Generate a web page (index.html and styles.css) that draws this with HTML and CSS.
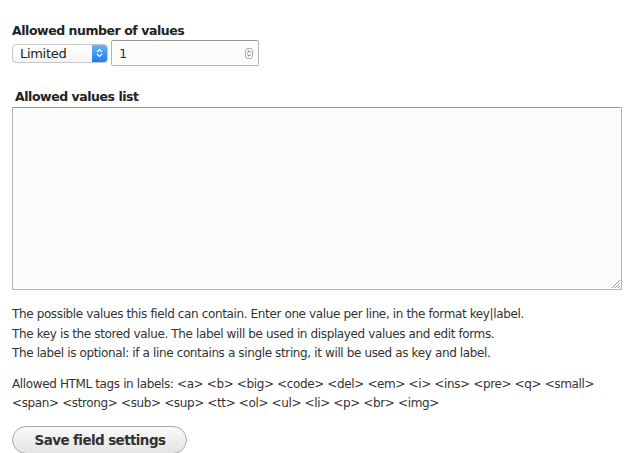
FILE: index.html
```html
<!DOCTYPE html>
<html>
<head>
<meta charset="utf-8">
<link rel="stylesheet" href="styles.css">
</head>
<body>
<form class="settings">
  <div class="form-item">
    <label class="label">Allowed number of values</label>
    <div class="cardinality">
      <div class="select">
        <span class="select-value">Limited</span>
        <span class="select-arrow">
          <svg width="7" height="10" viewBox="0 0 7 10"><path d="M1 4 L3.5 1.5 L6 4 M1 6 L3.5 8.5 L6 6" fill="none" stroke="#fff" stroke-width="1.2"/></svg>
        </span>
      </div>
      <div class="number">
        <span class="number-value">1</span>
        <span class="spinner">
          <svg width="6" height="9" viewBox="0 0 6 9"><path d="M1.2 3.6 L3 1.8 L4.8 3.6 M1.2 5.4 L3 7.2 L4.8 5.4" fill="none" stroke="#555" stroke-width="0.9"/></svg>
        </span>
      </div>
    </div>
  </div>

  <div class="form-item values">
    <label class="label label-indent">Allowed values list</label>
    <div class="textarea">
      <svg class="grip" width="9" height="9" viewBox="0 0 9 9"><path d="M9 1 L1 9 M9 4 L4 9 M9 7 L7 9" stroke="#999" stroke-width="1"/></svg>
    </div>
    <div class="description">
      <p>The possible values this field can contain. Enter one value per line, in the format key|label.<br>The key is the stored value. The label will be used in displayed values and edit forms.<br>The label is optional: if a line contains a single string, it will be used as key and label.</p>
      <p>Allowed HTML tags in labels: &lt;a&gt; &lt;b&gt; &lt;big&gt; &lt;code&gt; &lt;del&gt; &lt;em&gt; &lt;i&gt; &lt;ins&gt; &lt;pre&gt; &lt;q&gt; &lt;small&gt;<br>&lt;span&gt; &lt;strong&gt; &lt;sub&gt; &lt;sup&gt; &lt;tt&gt; &lt;ol&gt; &lt;ul&gt; &lt;li&gt; &lt;p&gt; &lt;br&gt; &lt;img&gt;</p>
    </div>
  </div>

  <div class="actions">
    <button type="button" class="button">Save field settings</button>
  </div>
</form>
</body>
</html>
```

FILE: styles.css
```css
html, body {
  margin: 0;
  padding: 0;
  background: #fff;
}
body {
  font-family: "DejaVu Sans", Verdana, sans-serif;
  color: #333;
  overflow: hidden;
}
.settings {
  padding: 22px 15px 0 12px;
}
.label {
  display: block;
  font-weight: bold;
  font-size: 12.5px;
  line-height: 17px;
  color: #222;
  letter-spacing: -0.45px;
  white-space: nowrap;
}
.label-indent {
  padding-left: 3px;
}
.cardinality {
  display: flex;
  align-items: center;
  gap: 3px;
  margin-top: 1px;
}
.select {
  display: flex;
  width: 94px;
  height: 17px;
  border: 1px solid #c8c8c8;
  border-radius: 4px;
  background: linear-gradient(#ffffff, #f4f4f4);
  overflow: hidden;
  font-size: 13px;
}
.select-value {
  flex: 1;
  padding-left: 7px;
  line-height: 17px;
  color: #222;
  letter-spacing: -0.3px;
}
.select-arrow {
  width: 15px;
  display: flex;
  align-items: center;
  justify-content: center;
  background: linear-gradient(#6cb3fa, #1a7ef0);
}
.number {
  display: flex;
  align-items: center;
  width: 146px;
  height: 24px;
  border: 1px solid #b4b4b4;
  border-top-color: #999;
  border-radius: 2px;
  background: #fcfcfa;
  font-size: 13px;
}
.number-value {
  flex: 1;
  padding-left: 7px;
  color: #333;
}
.spinner {
  display: flex;
  width: 6px;
  height: 9px;
  margin-right: 5px;
  border: 1px solid #aaa;
  border-radius: 3px;
  background: #fff;
}
.values {
  margin-top: 22px;
}
.textarea {
  position: relative;
  margin-top: 2px;
  height: 181px;
  border: 1px solid #b4b4b4;
  border-top-color: #999;
  background: #fcfcfa;
}
.grip {
  position: absolute;
  right: 1px;
  bottom: 1px;
}
.description {
  font-size: 12px;
  line-height: 19.5px;
  margin-top: 15px;
  color: #333;
  letter-spacing: -0.37px;
  white-space: nowrap;
}
.description p {
  margin: 0 0 11px;
}
.actions {
  margin-top: 12px;
}
.button {
  font-family: "DejaVu Sans", Verdana, sans-serif;
  font-weight: bold;
  font-size: 13.5px;
  letter-spacing: -0.6px;
  white-space: nowrap;
  color: #333;
  width: 175px;
  height: 28px;
  padding: 0 0 0 1px;
  border: 1px solid #a8a8a8;
  border-radius: 14px;
  background: linear-gradient(#fafafa, #e4e4e4);
}
```
